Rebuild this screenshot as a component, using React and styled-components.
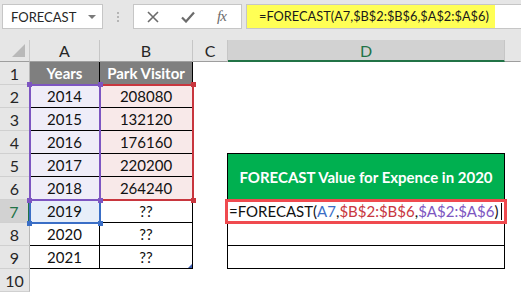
import React from "react";
import styled, { createGlobalStyle } from "styled-components";

const GlobalStyle = createGlobalStyle`
  html, body {
    margin: 0;
    padding: 0;
    background: #ffffff;
  }
  body {
    font-family: Lato, "Liberation Sans", sans-serif;
  }
`;

const Page = styled.div`
  width: 521px;
  height: 292px;
  overflow: hidden;
  display: flex;
  flex-direction: column;
  background: #fff;
`;

const Toolbar = styled.div`
  height: 40px;
  box-sizing: border-box;
  padding: 4px 0 0 2px;
  display: flex;
  align-items: flex-start;
  background: #e6e6e6;
`;

const NameBox = styled.div`
  width: 101px;
  height: 25px;
  box-sizing: border-box;
  background: #fff;
  border: 1px solid #c6c6c6;
  display: flex;
  align-items: center;
  justify-content: space-between;
  padding: 0 6px 0 8px;
  font-size: 13px;
  color: #262626;
`;

const Caret = styled.span`
  width: 0;
  height: 0;
  border-left: 4px solid transparent;
  border-right: 4px solid transparent;
  border-top: 4px solid #7a7a7a;
`;

const Grip = styled.div`
  margin: 8px 0 0 14px;
  display: flex;
  flex-direction: column;
  gap: 2px;
  span {
    width: 2px;
    height: 2px;
    background: #b5b5b5;
  }
`;

const IconBox = styled.div`
  margin-left: 14px;
  width: 109px;
  height: 25px;
  box-sizing: border-box;
  background: #fff;
  border: 1px solid #c6c6c6;
  display: flex;
  align-items: center;
  justify-content: space-around;
  padding: 0 4px 0 2px;
`;

const Fx = styled.span`
  font-family: "Liberation Serif", serif;
  font-style: italic;
  font-size: 15px;
  color: #6b6b6b;
  letter-spacing: -1px;
`;

const FormulaBox = styled.div`
  margin-left: 4px;
  flex: 1;
  height: 25px;
  box-sizing: border-box;
  background: #fff;
  border: 1px solid #c6c6c6;
  border-right: none;
  display: flex;
`;

const Highlight = styled.div`
  width: 248px;
  background: #ffff55;
  padding-left: 12px;
  box-sizing: border-box;
  font-size: 12.8px;
  line-height: 23px;
  color: #1a1a1a;
  white-space: nowrap;
`;

const Sheet = styled.div`
  display: grid;
  grid-template-columns: 30px 70px 93px 35px 277px 16px;
  grid-template-rows: 22px repeat(10, 23px);
  font-size: 15px;
`;

const Corner = styled.div`
  grid-column: 1;
  grid-row: 1;
  position: relative;
  background: #e6e6e6;
  border-right: 1px solid #c9c9c9;
  border-bottom: 1px solid #9e9e9e;
  box-sizing: border-box;
  &::after {
    content: "";
    position: absolute;
    right: 4px;
    bottom: 4px;
    border-left: 13px solid transparent;
    border-bottom: 13px solid #b9b9b9;
  }
`;

const ColHead = styled.div`
  grid-row: 1;
  background: ${(p) => (p.$active ? "#d2d2d2" : "#e6e6e6")};
  border-right: 1px solid ${(p) => (p.$last ? "transparent" : "#c6c6c6")};
  border-bottom: ${(p) => (p.$active ? "2px solid #217346" : "1px solid #9e9e9e")};
  box-sizing: border-box;
  display: flex;
  align-items: center;
  justify-content: center;
  color: ${(p) => (p.$active ? "#217346" : "#262626")};
  font-size: 16px;
`;

const RowHead = styled.div`
  grid-column: 1;
  background: ${(p) => (p.$active ? "#d2d2d2" : "#e6e6e6")};
  border-right: ${(p) => (p.$active ? "2px solid #217346" : "1px solid #b8b8b8")};
  border-bottom: 1px solid #d0d0d0;
  box-sizing: border-box;
  display: flex;
  align-items: center;
  justify-content: center;
  color: ${(p) => (p.$active ? "#217346" : "#262626")};
  font-size: 16px;
`;

const Cell = styled.div`
  box-sizing: border-box;
  background: ${(p) => p.$bg || "#fff"};
  border-right: 1px solid ${(p) => (p.$lined ? "#000" : "transparent")};
  border-bottom: 1px solid ${(p) => (p.$lined ? "#000" : "transparent")};
  display: flex;
  align-items: center;
  justify-content: center;
  color: ${(p) => (p.$head ? "#fff" : "#111")};
  font-weight: ${(p) => (p.$head ? 700 : 400)};
  white-space: nowrap;
`;

const DCell = styled(Cell)`
  grid-column: 5;
  border-left: 1px solid #000;
  margin-left: -1px;
  border-top: ${(p) => (p.$top ? "1px solid #000" : "none")};
  margin-top: ${(p) => (p.$top ? "-1px" : "0")};
  justify-content: flex-start;
  padding-left: 1px;
`;

const Banner = styled(DCell)`
  background: #00b050;
  color: #fff;
  font-weight: 700;
  justify-content: center;
  padding-left: 0;
`;

const Range = styled.div`
  position: relative;
  z-index: 2;
  border: 2px solid ${(p) => p.$color};
  margin: -1px -1px -1px -1px;
  pointer-events: none;
`;

const Handle = styled.span`
  position: absolute;
  width: 5px;
  height: 5px;
  background: ${(p) => p.$color};
  ${(p) => (p.$top ? "top: -4px;" : "bottom: -4px;")}
  ${(p) => (p.$left ? "left: -4px;" : "right: -4px;")}
`;

const EditBox = styled.div`
  grid-column: 5;
  position: relative;
  z-index: 3;
  border: 3px solid #ef4a4f;
  margin: -1px -2px -1px -3px;
  pointer-events: none;
`;

const Resize = styled.span`
  grid-column: 3;
  grid-row: 10;
  align-self: end;
  justify-self: end;
  margin: 0 1px 1px 0;
  width: 0;
  height: 0;
  border-left: 4px solid transparent;
  border-bottom: 4px solid #3a5cb0;
  z-index: 2;
`;

const Ref = styled.span`
  color: ${(p) => p.$color};
`;

const Cursor = styled.span`
  display: inline-block;
  width: 1px;
  height: 17px;
  margin-left: 3px;
  background: #000;
  vertical-align: middle;
`;

const rows = [
  { n: 1, a: "Years", b: "Park Visitor", head: true },
  { n: 2, a: "2014", b: "208080", aBg: "#efedf8", bBg: "#f8e9e9" },
  { n: 3, a: "2015", b: "132120", aBg: "#efedf8", bBg: "#f8e9e9" },
  { n: 4, a: "2016", b: "176160", aBg: "#efedf8", bBg: "#f8e9e9" },
  { n: 5, a: "2017", b: "220200", aBg: "#efedf8", bBg: "#f8e9e9" },
  { n: 6, a: "2018", b: "264240", aBg: "#efedf8", bBg: "#f8e9e9" },
  { n: 7, a: "2019", b: "??", aBg: "#e7eef9" },
  { n: 8, a: "2020", b: "??" },
  { n: 9, a: "2021", b: "??" },
  { n: 10 },
];

const PURPLE = "#7d56c1";
const RED = "#c8363e";
const BLUE = "#3a6ec6";

const App = () => {
  return (
    <Page>
      <GlobalStyle />
      <Toolbar>
        <NameBox>
          FORECAST
          <Caret />
        </NameBox>
        <Grip>
          <span />
          <span />
          <span />
        </Grip>
        <IconBox>
          <svg width="12" height="12" viewBox="0 0 12 12">
            <path d="M1 1 L11 11 M11 1 L1 11" stroke="#6b6b6b" strokeWidth="1.6" />
          </svg>
          <svg width="14" height="12" viewBox="0 0 14 12">
            <path d="M1 6.5 L5 10.5 L13 1.5" stroke="#6b6b6b" strokeWidth="2.2" fill="none" />
          </svg>
          <Fx>fx</Fx>
        </IconBox>
        <FormulaBox>
          <Highlight>=FORECAST(A7,$B$2:$B$6,$A$2:$A$6)</Highlight>
        </FormulaBox>
      </Toolbar>

      <Sheet>
        <Corner />
        {["A", "B", "C", "D", ""].map((c, i) => (
          <ColHead key={i} style={{ gridColumn: i + 2 }} $active={c === "D"} $last={c === ""}>
            {c}
          </ColHead>
        ))}

        {rows.map((r) => (
          <React.Fragment key={r.n}>
            <RowHead style={{ gridRow: r.n + 1 }} $active={r.n === 7}>
              {r.n}
            </RowHead>
            {r.a && (
              <>
                <Cell style={{ gridColumn: 2, gridRow: r.n + 1 }} $lined $head={r.head} $bg={r.head ? "#7f7f7f" : r.aBg}>
                  {r.a}
                </Cell>
                <Cell style={{ gridColumn: 3, gridRow: r.n + 1 }} $lined $head={r.head} $bg={r.head ? "#7f7f7f" : r.bBg}>
                  {r.b}
                </Cell>
              </>
            )}
          </React.Fragment>
        ))}

        <Banner style={{ gridRow: "6 / 8" }} $lined $top>
          FORECAST Value for Expence in 2020
        </Banner>
        <DCell style={{ gridRow: 8 }} $lined>
          =FORECAST(<Ref $color={BLUE}>A7</Ref>,<Ref $color={RED}>$B$2:$B$6</Ref>,
          <Ref $color={PURPLE}>$A$2:$A$6</Ref>)<Cursor />
        </DCell>
        <DCell style={{ gridRow: 9 }} $lined />
        <DCell style={{ gridRow: 10 }} $lined />

        <Range style={{ gridColumn: 3, gridRow: "3 / 8" }} $color={RED}>
          <Handle $color={RED} $top />
          <Handle $color={RED} />
        </Range>
        <Range style={{ gridColumn: 2, gridRow: "8 / 9" }} $color={BLUE}>
          <Handle $color={BLUE} $left />
          <Handle $color={BLUE} />
        </Range>
        <Range style={{ gridColumn: 2, gridRow: "3 / 8" }} $color={PURPLE}>
          <Handle $color={PURPLE} $top $left />
          <Handle $color={PURPLE} $top />
          <Handle $color={PURPLE} $left />
          <Handle $color={PURPLE} />
        </Range>
        <EditBox style={{ gridRow: 8 }} />
        <Resize />
      </Sheet>
    </Page>
  );
};

export default App;
